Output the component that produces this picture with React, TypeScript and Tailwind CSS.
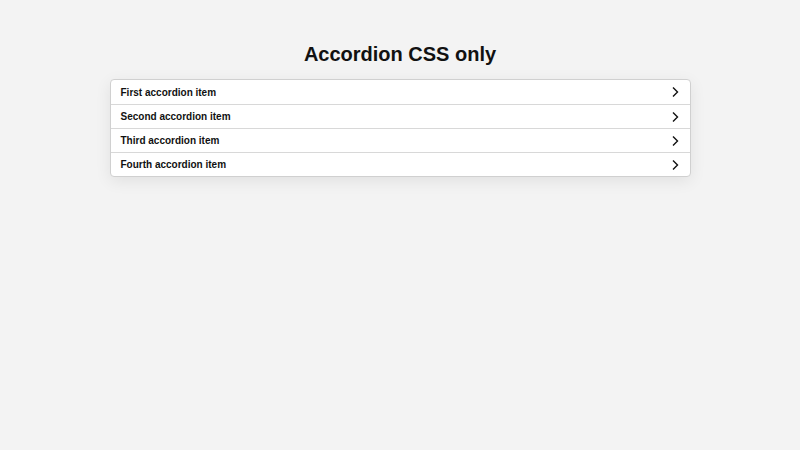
const items = [
  "First accordion item",
  "Second accordion item",
  "Third accordion item",
  "Fourth accordion item",
];

const Chevron = () => (
  <svg width="8" height="12" viewBox="0 0 8 12" fill="none" className="shrink-0">
    <path d="M2 1.5 L6.5 6 L2 10.5" stroke="#111" strokeWidth="1.4" />
  </svg>
);

export default function App() {
  return (
    <div className="min-h-[450px] bg-[#f3f3f3] pt-[42px] font-['Liberation_Sans',Arial,sans-serif]">
      <h1 className="text-center text-[20px] font-bold leading-[24px] text-[#111]">
        Accordion CSS only
      </h1>
      <div className="mx-auto mt-[13px] w-[581px] overflow-hidden rounded-[4px] border border-[#d0d0d0] bg-white shadow-[0_4px_16px_rgba(0,0,0,0.08)]">
        {items.map((label, i) => (
          <div
            key={label}
            className={`flex h-[24px] items-center justify-between pl-[10px] pr-[11px] ${
              i > 0 ? "border-t border-[#d8d8d8]" : ""
            }`}
          >
            <span className="text-[10px] font-bold text-[#111]">{label}</span>
            <Chevron />
          </div>
        ))}
      </div>
    </div>
  );
}
